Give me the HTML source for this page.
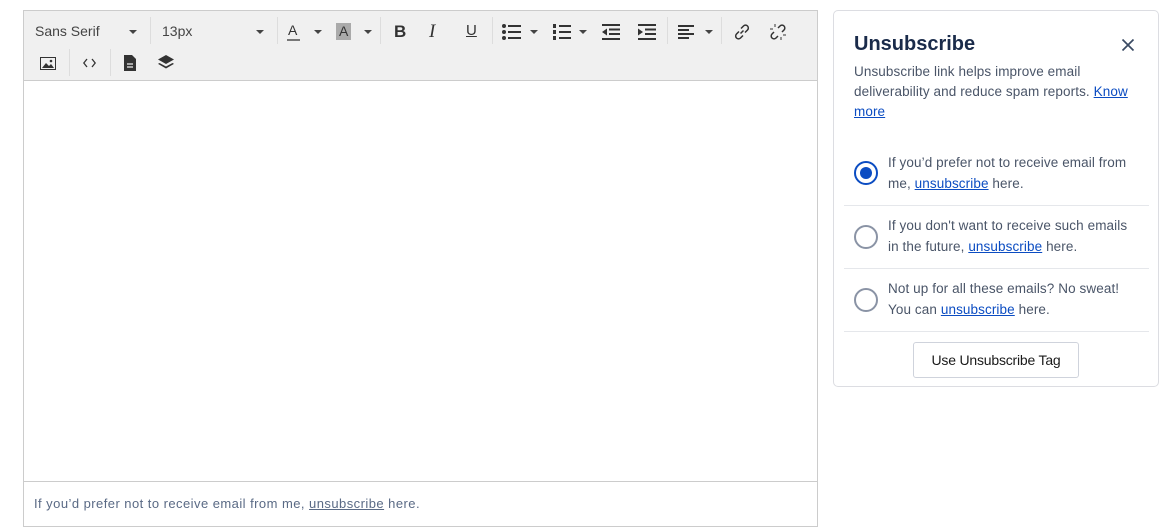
<!DOCTYPE html>
<html><head><style>
*{box-sizing:border-box;margin:0;padding:0}
body{width:1172px;height:532px;background:#fff;position:relative;overflow:hidden;font-family:"Liberation Sans",Arial,sans-serif}
.ed{position:absolute;left:23px;top:10px;width:795px;height:517px;border:1px solid #ccc}
.tb{position:absolute;left:0;top:0;width:793px;height:70px;background:#f0f0f0;border-bottom:1px solid #ccc}
.a{position:absolute;font-size:14px;color:#444}
.sep{position:absolute;width:1px;background:#ddd}
.car{position:absolute;width:0;height:0;border-left:4px solid transparent;border-right:4px solid transparent;border-top:4px solid #444}
.ic{position:absolute}
.foot{position:absolute;left:0;top:470px;width:793px;height:45px;border-top:1px solid #ccc;font-size:13px;letter-spacing:0.45px;color:#5a6a85;padding:14px 10px}
.foot u{color:#5a6a85}
.pn{position:absolute;left:833px;top:10px;width:326px;height:377px;border:1px solid #dcdde2;border-radius:5px}
h1{position:absolute;left:20px;top:22px;font-size:20px;color:#1a2b4a;font-weight:bold}
.x{position:absolute;left:288px;top:28px}
.d{position:absolute;left:20px;top:51px;width:292px;font-size:13.5px;line-height:20px;color:#4a5568;letter-spacing:0.1px}
a{color:#0b4cc2;text-decoration:underline}
.op{position:absolute;left:10px;width:305px;border-top:1px solid #e5e7eb;font-size:13.5px;line-height:21px;color:#4a5568;letter-spacing:0.1px}
.op .t{position:absolute;left:44px;top:9px;width:252px}
.r{position:absolute;left:10px;width:24px;height:24px;border-radius:50%;border:2px solid #8a93a5}
.btn{position:absolute;left:79px;top:331px;width:166px;height:36px;border:1px solid #cfd3dc;border-radius:3px;font-size:14px;color:#1a1a1a;text-align:center;line-height:34px;letter-spacing:-0.2px}
</style></head><body>
<div class="ed">
<div class="tb">
<div class="a" style="left:11px;top:12px">Sans Serif</div><div class="car" style="left:105px;top:19px"></div>
<div class="sep" style="left:126px;top:6px;height:27px"></div>
<div class="a" style="left:138px;top:12px">13px</div><div class="car" style="left:232px;top:19px"></div>
<div class="sep" style="left:253px;top:6px;height:27px"></div>
<div class="a" style="left:264px;top:11px;font-size:14px;color:#333">A</div><div style="position:absolute;left:263px;top:28px;width:13px;height:2px;background:#777"></div><div class="car" style="left:290px;top:19px"></div>
<div style="position:absolute;left:312px;top:12px;width:15px;height:17px;background:#aaa"></div><div class="a" style="left:315px;top:12px;font-size:14px;color:#333">A</div><div class="car" style="left:340px;top:19px"></div>
<div class="sep" style="left:356px;top:6px;height:27px"></div>
<div class="a" style="left:370px;top:11px;font-weight:bold;font-size:17px;color:#333">B</div>
<div class="a" style="left:405px;top:10px;font-style:italic;font-family:'Liberation Serif',serif;font-size:19px;color:#333">I</div>
<div class="a" style="left:442px;top:11px;text-decoration:underline;font-size:15px;color:#333">U</div>
<div class="sep" style="left:468px;top:6px;height:27px"></div>
<svg class="ic" style="left:478px;top:13px" width="20" height="16"><g fill="#333"><circle cx="2" cy="2" r="2"/><circle cx="2" cy="8" r="2"/><circle cx="2" cy="14" r="2"/><rect x="6" y="1" width="13" height="2"/><rect x="6" y="7" width="13" height="2"/><rect x="6" y="13" width="13" height="2"/></g></svg>
<div class="car" style="left:506px;top:19px"></div>
<svg class="ic" style="left:529px;top:13px" width="20" height="16"><g fill="#333"><rect x="0" y="0" width="3" height="4"/><rect x="0" y="6" width="3" height="4"/><rect x="0" y="12" width="3" height="4"/><rect x="6" y="1" width="12" height="2"/><rect x="6" y="7" width="12" height="2"/><rect x="6" y="13" width="12" height="2"/></g></svg>
<div class="car" style="left:555px;top:19px"></div>
<svg class="ic" style="left:578px;top:13px" width="18" height="16"><g fill="#333"><rect x="0" y="0" width="18" height="2"/><rect x="7" y="4.5" width="11" height="2"/><rect x="7" y="9" width="11" height="2"/><rect x="0" y="14" width="18" height="2"/><path d="M5 4.5v7L0 8z"/></g></svg>
<svg class="ic" style="left:614px;top:13px" width="18" height="16"><g fill="#333"><rect x="0" y="0" width="18" height="2"/><rect x="7" y="4.5" width="11" height="2"/><rect x="7" y="9" width="11" height="2"/><rect x="0" y="14" width="18" height="2"/><path d="M0 4.5v7L5 8z"/></g></svg>
<div class="sep" style="left:643px;top:6px;height:27px"></div>
<svg class="ic" style="left:654px;top:14px" width="16" height="14"><g fill="#333"><rect x="0" y="0" width="16" height="2"/><rect x="0" y="4" width="11" height="2"/><rect x="0" y="8" width="16" height="2"/><rect x="0" y="12" width="11" height="2"/></g></svg>
<div class="car" style="left:681px;top:19px"></div>
<div class="sep" style="left:697px;top:6px;height:27px"></div>
<svg class="ic" style="left:709px;top:12px" width="18" height="18" fill="none" stroke="#333" stroke-width="1.5"><path d="M7.5 10.5l3-3"/><path d="M8 5.5l2.5-2.5a2.8 2.8 0 014 4L12 9.5"/><path d="M10 12.5L7.5 15a2.8 2.8 0 01-4-4L6 8.5"/></svg>
<svg class="ic" style="left:745px;top:12px" width="18" height="18" fill="none" stroke="#333" stroke-width="1.5"><path d="M9 5l2-2a2.8 2.8 0 014 4l-2 2"/><path d="M9 13l-2 2a2.8 2.8 0 01-4-4l2-2"/><path d="M6 1v3M1 6h3M12 17v-3M17 12h-3" stroke-width="1"/></svg>
</div>
<svg class="ic" style="left:16px;top:46px" width="16" height="13"><rect x="0.5" y="0.5" width="15" height="12" fill="none" stroke="#333"/><path d="M2 11l4-5 3 3 2-2 3 4z" fill="#333"/><circle cx="11" cy="4" r="1.3" fill="#333"/></svg>
<div class="sep" style="left:45px;top:38px;height:27px"></div>
<svg class="ic" style="left:59px;top:47px" width="13" height="10" fill="none" stroke="#333" stroke-width="1.3"><path d="M4 1L0.8 5 4 9M9 1l3.2 4L9 9"/></svg>
<div class="sep" style="left:86px;top:38px;height:27px"></div>
<svg class="ic" style="left:100px;top:44px" width="12" height="16"><path d="M0 0h8l4 4v12H0z" fill="#333"/><path d="M3 9h6M3 12h6" stroke="#f0f0f0" stroke-width="1.3"/></svg>
<svg class="ic" style="left:134px;top:44px" width="16" height="16"><path d="M8 0l8 4.5-8 4.5-8-4.5z" fill="#333"/><path d="M1.5 8L8 11.5 14.5 8l1.5.9L8 13.5 0 8.9z" fill="#333"/></svg>
<div class="foot">If you’d prefer not to receive email from me, <u>unsubscribe</u> here.</div>
</div>
<div class="pn">
<h1>Unsubscribe</h1>
<svg class="x" width="12" height="12" stroke="#3a4a63" stroke-width="1.7"><path d="M0.5 0.5l11 11M11.5 0.5l-11 11"/></svg>
<div class="d">Unsubscribe link helps improve email deliverability and reduce spam reports. <a>Know more</a></div>
<div class="op" style="top:140px;border-top:none;height:54px"><div class="r" style="top:10px;border-color:#0b4cc2"><div style="position:absolute;left:4px;top:4px;width:12px;height:12px;border-radius:50%;background:#0b4cc2"></div></div><div class="t" style="top:1px">If you’d prefer not to receive email from me, <a>unsubscribe</a> here.</div></div>
<div class="op" style="top:194px;height:63px"><div class="r" style="top:19px"></div><div class="t">If you don't want to receive such emails in the future, <a>unsubscribe</a> here.</div></div>
<div class="op" style="top:257px;height:63px"><div class="r" style="top:19px"></div><div class="t" style="width:245px">Not up for all these emails? No sweat! You can <a>unsubscribe</a> here.</div></div>
<div class="op" style="top:320px;height:1px"></div>
<div class="btn">Use Unsubscribe Tag</div>
</div>
</body></html>
